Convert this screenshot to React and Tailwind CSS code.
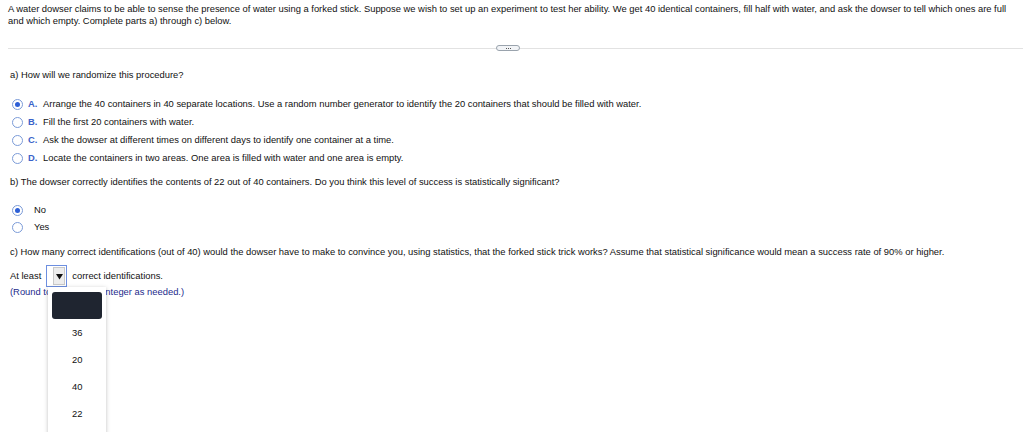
import { useState } from 'react';

const options = [
  { key: 'A', text: 'Arrange the 40 containers in 40 separate locations. Use a random number generator to identify the 20 containers that should be filled with water.' },
  { key: 'B', text: 'Fill the first 20 containers with water.' },
  { key: 'C', text: 'Ask the dowser at different times on different days to identify one container at a time.' },
  { key: 'D', text: 'Locate the containers in two areas. One area is filled with water and one area is empty.' },
];

// Small radio like the browser-default one in the screenshot
function Radio({ checked }) {
  return (
    <span className="w-[11px] h-[11px] rounded-full border border-[#7b9bd8] bg-white flex items-center justify-center shrink-0">
      {checked && <span className="w-[5px] h-[5px] rounded-full bg-[#2d5fd6]" />}
    </span>
  );
}

export default function App() {
  const [choice, setChoice] = useState('A');
  const [sig, setSig] = useState('No');

  return (
    <div className="relative w-[1024px] h-[432px] overflow-hidden bg-white text-[9.4px] leading-[12px] text-[#111] font-['Liberation_Sans',Arial,sans-serif]">
      {/* Question stem */}
      <div className="pl-[8px] pt-[3px] pr-[12px]">
        A water dowser claims to be able to sense the presence of water using a forked stick. Suppose we wish to set up an experiment to test her ability. We get 40 identical containers, fill half with water, and ask the dowser to tell which ones are full and which empty. Complete parts a) through c) below.
      </div>

      {/* Divider with the pill */}
      <div className="relative mt-[21px] ml-[8px] mr-[1px] h-[1px] bg-[#e2e2e2]">
        <div className="absolute left-[488px] top-[-3px] w-[24px] h-[6px] rounded-full border border-[#9aa3ad] bg-[#f2f4f7] flex items-center justify-center gap-[1px]">
          <span className="w-[1px] h-[1px] bg-[#555]" />
          <span className="w-[1px] h-[1px] bg-[#555]" />
          <span className="w-[1px] h-[1px] bg-[#555]" />
        </div>
      </div>

      {/* Part a */}
      <div className="pl-[10px] mt-[20px]">a) How will we randomize this procedure?</div>
      <div className="mt-[17px] flex flex-col gap-[6px]">
        {options.map((o) => (
          <div key={o.key} className="flex items-center h-[12px] pl-[12px] cursor-pointer" onClick={() => setChoice(o.key)}>
            <Radio checked={choice === o.key} />
            <span className="ml-[5px] w-[15px] font-bold text-[#3a62c9]">{o.key}.</span>
            <span>{o.text}</span>
          </div>
        ))}
      </div>

      {/* Part b */}
      <div className="pl-[10px] mt-[12px]">b) The dowser correctly identifies the contents of 22 out of 40 containers. Do you think this level of success is statistically significant?</div>
      <div className="mt-[16px] flex flex-col gap-[5px]">
        {['No', 'Yes'].map((v) => (
          <div key={v} className="flex items-center h-[12px] pl-[12px] cursor-pointer" onClick={() => setSig(v)}>
            <Radio checked={sig === v} />
            <span className="ml-[11px]">{v}</span>
          </div>
        ))}
      </div>

      {/* Part c */}
      <div className="pl-[10px] mt-[13px]">c) How many correct identifications (out of 40) would the dowser have to make to convince you, using statistics, that the forked stick trick works? Assume that statistical significance would mean a success rate of 90% or higher.</div>
      <div className="pl-[10px] mt-[7px] flex items-center h-[22px]">
        <span>At least</span>
        <div className="relative ml-[5px]">
          <div className="w-[21px] h-[22px] border border-[#6d8fe0] bg-white flex justify-end items-center pr-[1px]">
            <div className="w-[12px] h-[18px] bg-[#ededed] border border-[#c9c9c9] flex items-center justify-center">
              <svg width="7" height="7" viewBox="0 0 7 7"><path d="M0 1 H7 L3.5 6.5 Z" fill="#111" /></svg>
            </div>
          </div>
          {/* open dropdown list */}
          <div className="absolute left-[2px] top-[22px] w-[58px] h-[160px] bg-white shadow-[0_1px_4px_rgba(0,0,0,0.25)] z-10 px-[4px] pt-[5px] flex flex-col items-center">
            <div className="w-[50px] h-[27px] rounded-[3px] bg-[#1f2530]" />
            {['36', '20', '40', '22'].map((n) => (
              <div key={n} className="h-[27px] w-full flex items-center justify-center">{n}</div>
            ))}
          </div>
        </div>
        <span className="ml-[5px]">correct identifications.</span>
      </div>
      <div className="pl-[10px] -mt-[1px] text-[#1c2a8c]">(Round to the nearest integer as needed.)</div>
    </div>
  );
}
